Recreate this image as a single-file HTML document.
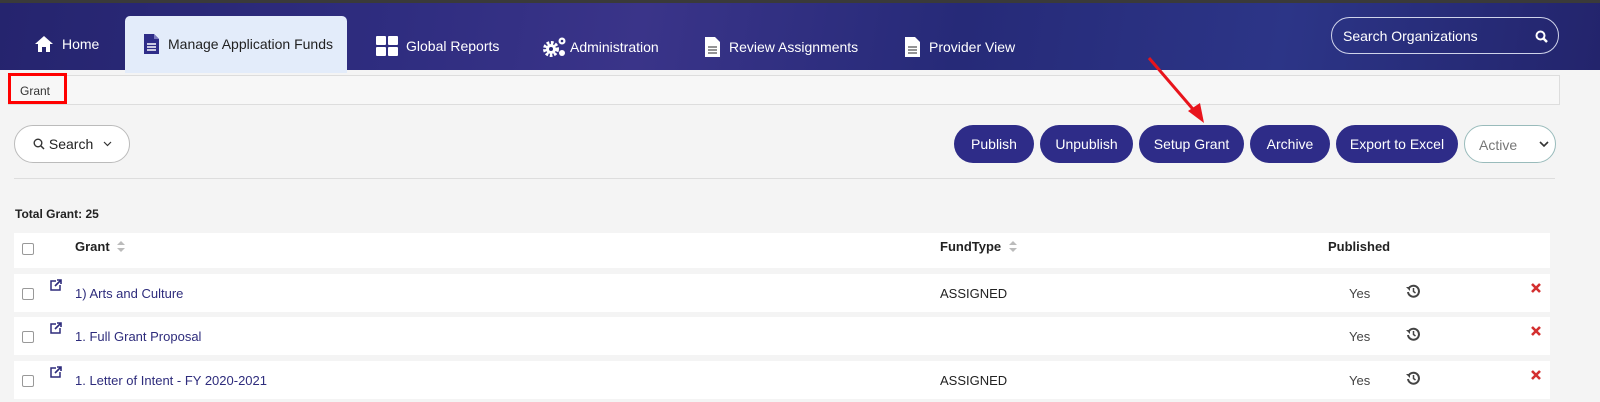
<!DOCTYPE html>
<html><head><style>
*{box-sizing:border-box;margin:0;padding:0}
body{width:1600px;height:402px;overflow:hidden;background:#f4f4f4;font-family:"Liberation Sans",Arial,sans-serif;font-size:13px;color:#222;position:relative}
.nav{position:absolute;left:0;top:0;width:1600px;height:70px;background:linear-gradient(100deg,#25246e 0%,#2f2d80 25%,#3a3489 40%,#262a78 60%,#2c3587 80%,#23246c 100%);border-top:3px solid #3a3a3a}
.ni{position:absolute;top:33px;color:#fff;font-size:14px;display:flex;align-items:center;gap:8px}
.tab{position:absolute;left:125px;top:13px;width:222px;height:57px;background:#e3ecfa;border-radius:5px 5px 0 0}
.so{position:absolute;left:1331px;top:14px;width:228px;height:37px;border:1px solid #cfd3ea;border-radius:19px;color:#fff;font-size:14px;padding:10px 11px}
.bc{position:absolute;left:8px;top:75px;width:1552px;height:30px;background:#f7f7f7;border:1px solid #ddd}
.red{position:absolute;left:8px;top:73px;width:59px;height:31px;border:3px solid #f00;font-size:12px;color:#333;padding:8px 0 0 9px}
.btn{position:absolute;top:125px;height:38px;border-radius:19px;background:#2e2c88;color:#fff;font-size:14px;display:flex;align-items:center;justify-content:center}
.row{position:absolute;left:14px;width:1536px;background:#fff}
.cb{position:absolute;left:8px;width:12px;height:12px;border:1px solid #999;border-radius:2px;background:#fff}
.t{position:absolute;font-size:13px}
.lk{color:#2e2c7c}
.ext{position:absolute;left:35px;top:5px}
.hist{position:absolute;left:1392px;top:10px}
.x{position:absolute;left:1517px;top:9px}
</style></head><body>
<div class="nav">
<div class="tab"></div>
<div class="ni" style="left:34px;top:32px"><svg width="20" height="17" viewBox="0 0 20 17"><path d="M10 1L1 9h3v8h4v-5h4v5h4V9h3z" fill="#fff"/></svg>Home</div>
<div class="ni" style="left:143px;color:#222;top:30px"><svg width="17" height="22" viewBox="0 0 17 22"><path d="M1 1h10l5 5v15H1z" fill="#2e2c88"/><path d="M11 1v5h5" fill="#7b7ac0"/><path d="M4 11h9M4 14h9M4 17h9" stroke="#fff" stroke-width="1.5"/></svg>Manage Application Funds</div>
<div class="ni" style="left:376px"><svg width="22" height="20" viewBox="0 0 22 20"><rect x="0" y="0" width="10" height="9" rx="1" fill="#fff"/><rect x="12" y="0" width="10" height="9" rx="1" fill="#fff"/><rect x="0" y="11" width="10" height="9" rx="1" fill="#fff"/><rect x="12" y="11" width="10" height="9" rx="1" fill="#fff"/></svg>Global Reports</div>
<div class="ni" style="left:543px;gap:3px"><svg width="24" height="22" viewBox="0 0 24 22"><circle cx="8" cy="13" r="6" fill="none" stroke="#fff" stroke-width="4" stroke-dasharray="2.5 1.5"/><circle cx="8" cy="13" r="5" fill="#fff"/><circle cx="8" cy="13" r="2" fill="#2b2a7c"/><circle cx="19" cy="5" r="3.5" fill="#fff"/><circle cx="19" cy="5" r="1.3" fill="#2b2a7c"/><circle cx="19" cy="17" r="3" fill="#fff"/></svg>Administration</div>
<div class="ni" style="left:704px"><svg width="17" height="22" viewBox="0 0 17 22"><path d="M1 1h10l5 5v15H1z" fill="#fff"/><path d="M4 11h9M4 14h9M4 17h9" stroke="#555" stroke-width="1.3"/></svg>Review Assignments</div>
<div class="ni" style="left:904px"><svg width="17" height="22" viewBox="0 0 17 22"><path d="M1 1h10l5 5v15H1z" fill="#fff"/><path d="M4 11h9M4 14h9M4 17h9" stroke="#555" stroke-width="1.3"/></svg>Provider View</div>
<div class="so">Search Organizations<svg style="position:absolute;right:10px;top:12px" width="13" height="13" viewBox="0 0 13 13"><circle cx="5.5" cy="5.5" r="4" fill="none" stroke="#fff" stroke-width="2"/><path d="M8.5 8.5l3.5 3.5" stroke="#fff" stroke-width="2.5"/></svg></div>
</div>
<div class="bc"></div>
<div class="red">Grant</div>
<svg style="position:absolute;left:1140px;top:55px" width="70" height="70"><path d="M9 3L58 60" stroke="#e8141c" stroke-width="3"/><path d="M64 68L48 56L60 48z" fill="#e8141c"/></svg>
<div style="position:absolute;left:14px;top:125px;width:116px;height:38px;border:1px solid #bbb;border-radius:19px;background:#fff;font-size:14px;padding:10px 0 0 18px">
<svg width="12" height="12" viewBox="0 0 12 12" style="vertical-align:-1px"><circle cx="5" cy="5" r="3.8" fill="none" stroke="#333" stroke-width="1.4"/><path d="M8 8l3 3" stroke="#333" stroke-width="1.5"/></svg> Search <svg width="9" height="6" style="margin-left:6px;vertical-align:2px"><path d="M1 1l3.5 3.5L8 1" stroke="#333" stroke-width="1.2" fill="none"/></svg></div>
<div class="btn" style="left:954px;width:80px">Publish</div>
<div class="btn" style="left:1040px;width:93px">Unpublish</div>
<div class="btn" style="left:1139px;width:105px">Setup Grant</div>
<div class="btn" style="left:1250px;width:80px">Archive</div>
<div class="btn" style="left:1336px;width:122px">Export to Excel</div>
<div style="position:absolute;left:1464px;top:125px;width:92px;height:38px;border:1px solid #9bb;border-radius:19px;background:#fff;color:#777;font-size:14px;padding:11px 0 0 14px">Active<svg style="position:absolute;right:6px;top:15px" width="10" height="7"><path d="M1 1l4 4 4-4" stroke="#333" stroke-width="1.6" fill="none"/></svg></div>
<div style="position:absolute;left:14px;top:178px;width:1541px;height:1px;background:#ddd"></div>
<div class="t" style="left:15px;top:207px;font-weight:bold;font-size:12px">Total Grant: 25</div>
<div class="row" style="top:233px;height:35px"><div class="cb" style="top:10px"></div>
<div class="t" style="left:61px;top:6px;font-weight:bold">Grant <svg width="8" height="11" style="margin-left:4px;vertical-align:-1px"><path d="M4 0L8 4H0zM4 11L0 7h8z" fill="#bbb"/></svg></div>
<div class="t" style="left:926px;top:6px;font-weight:bold">FundType <svg width="8" height="11" style="margin-left:4px;vertical-align:-1px"><path d="M4 0L8 4H0zM4 11L0 7h8z" fill="#bbb"/></svg></div>
<div class="t" style="left:1314px;top:6px;font-weight:bold">Published</div></div>
<!--rows-->
<div class="row" style="top:274px;height:38px"><div class="cb" style="top:14px"></div>
<svg class="ext" width="13" height="12" viewBox="0 0 13 12"><path d="M7 2H2v9h9V6" fill="none" stroke="#2e2c7c" stroke-width="1.5"/><path d="M6 7l6-6M8 1h4v4" fill="none" stroke="#2e2c7c" stroke-width="1.6"/></svg>
<div class="t lk" style="left:61px;top:12px">1) Arts and Culture</div>
<div class="t" style="left:926px;top:12px">ASSIGNED</div>
<div class="t" style="left:1335px;top:12px;color:#444">Yes</div>
<svg class="hist" width="14" height="14" viewBox="0 0 14 14"><path d="M3 4A5.5 5.5 0 1 1 2 8" fill="none" stroke="#444" stroke-width="2"/><path d="M0 3l4 0 0 4z" fill="#444"/><path d="M7.5 4v3.5l2 1.5" fill="none" stroke="#444" stroke-width="1.5"/></svg>
<svg class="x" width="10" height="10" viewBox="0 0 10 10"><path d="M1 1l8 8M9 1l-8 8" stroke="#d32f2f" stroke-width="2.6"/></svg></div>
<div class="row" style="top:317px;height:38px"><div class="cb" style="top:14px"></div>
<svg class="ext" width="13" height="12" viewBox="0 0 13 12"><path d="M7 2H2v9h9V6" fill="none" stroke="#2e2c7c" stroke-width="1.5"/><path d="M6 7l6-6M8 1h4v4" fill="none" stroke="#2e2c7c" stroke-width="1.6"/></svg>
<div class="t lk" style="left:61px;top:12px">1. Full Grant Proposal</div>
<div class="t" style="left:1335px;top:12px;color:#444">Yes</div>
<svg class="hist" width="14" height="14" viewBox="0 0 14 14"><path d="M3 4A5.5 5.5 0 1 1 2 8" fill="none" stroke="#444" stroke-width="2"/><path d="M0 3l4 0 0 4z" fill="#444"/><path d="M7.5 4v3.5l2 1.5" fill="none" stroke="#444" stroke-width="1.5"/></svg>
<svg class="x" width="10" height="10" viewBox="0 0 10 10"><path d="M1 1l8 8M9 1l-8 8" stroke="#d32f2f" stroke-width="2.6"/></svg></div>
<div class="row" style="top:361px;height:38px"><div class="cb" style="top:14px"></div>
<svg class="ext" width="13" height="12" viewBox="0 0 13 12"><path d="M7 2H2v9h9V6" fill="none" stroke="#2e2c7c" stroke-width="1.5"/><path d="M6 7l6-6M8 1h4v4" fill="none" stroke="#2e2c7c" stroke-width="1.6"/></svg>
<div class="t lk" style="left:61px;top:12px">1. Letter of Intent - FY 2020-2021</div>
<div class="t" style="left:926px;top:12px">ASSIGNED</div>
<div class="t" style="left:1335px;top:12px;color:#444">Yes</div>
<svg class="hist" width="14" height="14" viewBox="0 0 14 14"><path d="M3 4A5.5 5.5 0 1 1 2 8" fill="none" stroke="#444" stroke-width="2"/><path d="M0 3l4 0 0 4z" fill="#444"/><path d="M7.5 4v3.5l2 1.5" fill="none" stroke="#444" stroke-width="1.5"/></svg>
<svg class="x" width="10" height="10" viewBox="0 0 10 10"><path d="M1 1l8 8M9 1l-8 8" stroke="#d32f2f" stroke-width="2.6"/></svg></div>
</body></html>
